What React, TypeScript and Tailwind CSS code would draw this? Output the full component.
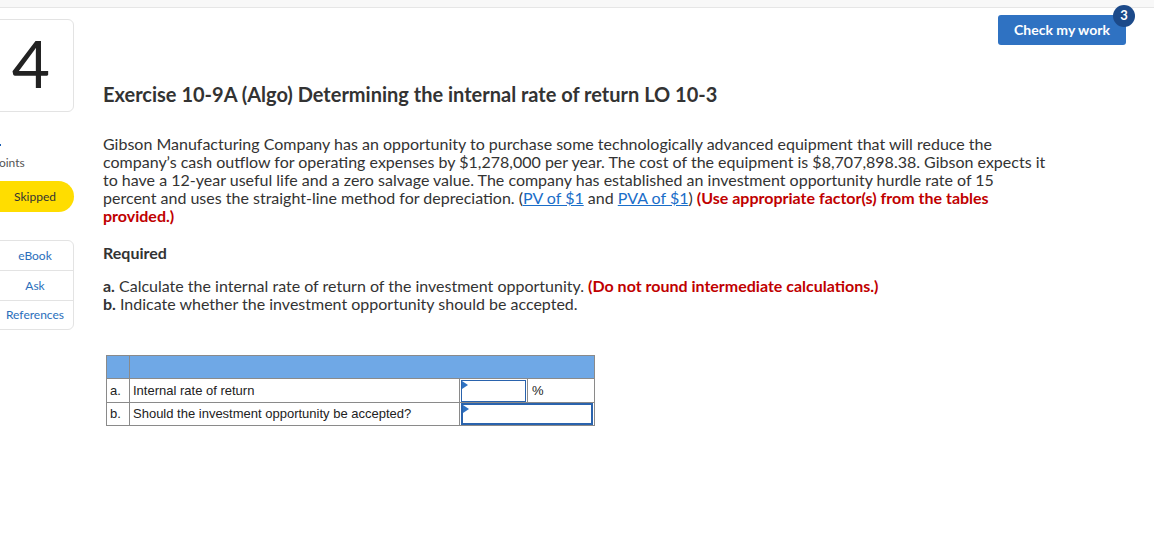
import React from "react";

const PN = { fontFamily: '"Lato", "Liberation Sans", sans-serif' } as const;
const AR = { fontFamily: '"Liberation Sans", Arial, sans-serif' } as const;

export default function App() {
  return (
    <div className="w-[1154px] h-[552px] bg-white overflow-hidden text-[#333]" style={PN}>
      <div className="h-[8px] bg-[#f8f8f8] border-b border-[#e6e6e6]" />
      <div className="flex">
        {/* sidebar */}
        <div className="w-[88px] -ml-[14px] shrink-0 flex flex-col pt-[11px]">
          <div className="h-[93px] border border-[#e3e3e3] rounded-[6px] flex items-center justify-center">
            <span className="text-[66px] leading-none text-[#222] font-normal mt-[-6px] pl-[2px]">4</span>
          </div>
          <div className="mt-[32px] pl-[12px] h-[8px] relative">
            <span className="absolute left-[12px] top-[0px] w-[3px] h-[2px] bg-[#1a5fb4]" />
          </div>
          <div className="pl-[6px] text-[12px] leading-[14px] text-[#555] mt-[4px]">Points</div>
          <div className="mt-[11px] h-[31px] rounded-full bg-[#ffdd00] flex items-center justify-center text-[12px] text-[#333]">
            <span className="pl-[10px]">Skipped</span>
          </div>
          <div className="mt-[28px] border border-[#e3e3e3] rounded-[6px] text-[12px] text-[#2a6ebb]">
            <div className="h-[30px] flex items-center justify-center pl-[10px] border-b border-[#e3e3e3]">eBook</div>
            <div className="h-[30px] flex items-center justify-center pl-[10px] border-b border-[#e3e3e3]">Ask</div>
            <div className="h-[28px] flex items-center justify-center pl-[10px]">References</div>
          </div>
        </div>

        {/* main */}
        <div className="flex-1 pl-[29px] pr-[28px]">
          <div className="flex justify-end pt-[7px]">
            <div className="relative">
              <button className="h-[30px] w-[128px] bg-[#2f72c2] rounded-[3px] text-white text-[14px] leading-[28px] font-bold">
                Check my work
              </button>
              <span className="absolute -top-[10px] -right-[9px] w-[22px] h-[22px] rounded-full bg-[#1c4a8a] text-white text-[13px] font-bold flex items-center justify-center">
                3
              </span>
            </div>
          </div>
          <h1 className="mt-[37px] text-[20px] leading-[24px] font-bold text-[#333]">
            Exercise 10-9A (Algo) Determining the internal rate of return LO 10-3
          </h1>
          <p className="mt-[29px] text-[16px] leading-[18px] text-[#333] whitespace-nowrap">
            Gibson Manufacturing Company has an opportunity to purchase some technologically advanced equipment that will reduce the
            <br />
            company’s cash outflow for operating expenses by $1,278,000 per year. The cost of the equipment is $8,707,898.38. Gibson expects it
            <br />
            to have a 12-year useful life and a zero salvage value. The company has established an investment opportunity hurdle rate of 15
            <br />
            percent and uses the straight-line method for depreciation. (<span className="text-[#1a6ec9] underline">PV of $1</span> and{" "}
            <span className="text-[#1a6ec9] underline">PVA of $1</span>){" "}
            <b className="text-[#c00000]">(Use appropriate factor(s) from the tables</b>
            <br />
            <b className="text-[#c00000]">provided.)</b>
          </p>
          <h2 className="mt-[19px] text-[16px] leading-[18px] font-bold text-[#333]">Required</h2>
          <p className="mt-[15px] text-[16px] leading-[18px] text-[#333]">
            <b>a.</b> Calculate the internal rate of return of the investment opportunity.{" "}
            <b className="text-[#c00000]">(Do not round intermediate calculations.)</b>
            <br />
            <b>b.</b> Indicate whether the investment opportunity should be accepted.
          </p>

          <table className="mt-[42px] ml-[3px] border-collapse text-[13px] text-[#222]" style={AR}>
            <tbody>
              <tr className="h-[23px] bg-[#6fa8e6]">
                <td className="w-[23px] border border-[#8a8a8a]" />
                <td colSpan={3} className="border border-[#8a8a8a]" />
              </tr>
              <tr className="h-[24px]">
                <td className="border border-[#8a8a8a] px-[3px]">a.</td>
                <td className="w-[330px] border border-[#8a8a8a] px-[3px]">Internal rate of return</td>
                <td className="w-[68px] border border-[#8a8a8a] p-0">
                  <div className="relative h-[22px] border border-[#2a63ad] mx-[1px]">
                    <span className="absolute left-0 top-0 w-0 h-0 border-t-[4px] border-b-[4px] border-l-[6px] border-t-transparent border-b-transparent border-l-[#2f72c2]" />
                  </div>
                </td>
                <td className="w-[67px] border border-[#8a8a8a] px-[4px]">%</td>
              </tr>
              <tr className="h-[23px]">
                <td className="border border-[#8a8a8a] px-[3px]">b.</td>
                <td className="border border-[#8a8a8a] px-[3px]">Should the investment opportunity be accepted?</td>
                <td colSpan={2} className="border border-[#8a8a8a] p-0">
                  <div className="relative h-[22px] border-2 border-[#2a63ad] mx-[1px]">
                    <span className="absolute left-0 top-0 w-0 h-0 border-t-[4px] border-b-[4px] border-l-[6px] border-t-transparent border-b-transparent border-l-[#2f72c2]" />
                  </div>
                </td>
              </tr>
            </tbody>
          </table>
        </div>
      </div>
    </div>
  );
}
